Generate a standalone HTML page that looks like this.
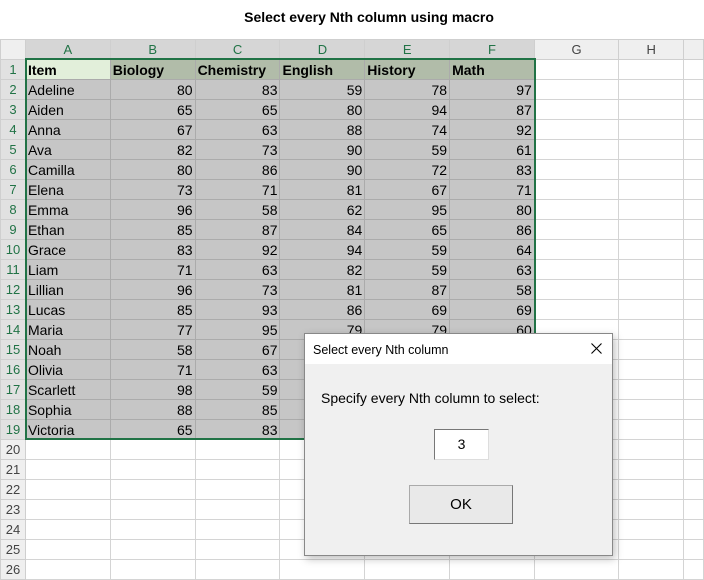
<!DOCTYPE html>
<html><head><meta charset="utf-8"><style>
*{margin:0;padding:0;box-sizing:border-box}
body{width:704px;height:580px;background:#fff;position:relative;overflow:hidden;font-family:"Liberation Sans",sans-serif}
.title{position:absolute;top:9px;left:0;width:738px;text-align:center;font-weight:bold;font-size:14px;color:#000}
table{position:absolute;left:0;top:39px;border-collapse:collapse;table-layout:fixed;font-size:14px}
td{height:20px;border:1px solid #d4d4d4;padding:0 2px;white-space:nowrap;overflow:hidden;line-height:18px}
td.rh{background:#efefef;color:#444;text-align:center;font-size:13px;border-color:#cfcfcf}
td.rs{background:#e1e1e1;color:#217346}
tr.ch td{background:#efefef;color:#444;text-align:center;font-size:13px;height:20px;border-color:#cfcfcf}
tr.ch td.cs{background:#d6d6d6;color:#217346}
td.s{background:#c6c6c6;border-color:#ababab;text-align:right}
td.s.l{text-align:left}
td.h{background:#b1bca9;font-weight:bold;text-align:left;border-color:#ababab}
td.a1{background:#e2efda;font-weight:bold;border-color:#ababab}
.sel{position:absolute;left:25px;top:58px;width:511px;height:382px;border:2px solid #217346}
.dlg{position:absolute;left:304px;top:333px;width:309px;height:223px;background:#f0f0f0;border:1px solid #888;box-shadow:2px 3px 8px rgba(0,0,0,.25);font-size:14px;color:#000}
.tb{height:30px;background:#fff;font-size:12.5px;padding:9px 0 0 8px}
.x{position:absolute;right:10px;top:9px;width:11px;height:11px}
.lbl{position:absolute;left:16px;top:56px}
.inp{position:absolute;left:129px;top:95px;width:55px;height:31px;background:#fff;border:1px solid #777;border-right-color:#ddd;border-bottom-color:#ddd;text-align:center;line-height:28px}
.ok{position:absolute;left:104px;top:151px;width:104px;height:39px;background:#e9e9e9;border:1px solid #aaa;border-right-color:#777;border-bottom-color:#777;text-align:center;line-height:37px;font-size:15px}
</style></head><body>
<div class="title">Select every Nth column using macro</div>
<table>
<colgroup><col style="width:25px"><col style="width:85px"><col style="width:85px"><col style="width:85px"><col style="width:85px"><col style="width:85px"><col style="width:85px"><col style="width:85px"><col style="width:65px"><col style="width:20px"></colgroup>
<tr class="ch"><td></td><td class="cs">A</td><td class="cs">B</td><td class="cs">C</td><td class="cs">D</td><td class="cs">E</td><td class="cs">F</td><td>G</td><td>H</td><td></td></tr>
<tr><td class="rh rs">1</td><td class="a1">Item</td><td class="h">Biology</td><td class="h">Chemistry</td><td class="h">English</td><td class="h">History</td><td class="h">Math</td><td></td><td></td><td></td></tr>
<tr><td class="rh rs">2</td><td class="s l">Adeline</td><td class="s">80</td><td class="s">83</td><td class="s">59</td><td class="s">78</td><td class="s">97</td><td></td><td></td><td></td></tr>
<tr><td class="rh rs">3</td><td class="s l">Aiden</td><td class="s">65</td><td class="s">65</td><td class="s">80</td><td class="s">94</td><td class="s">87</td><td></td><td></td><td></td></tr>
<tr><td class="rh rs">4</td><td class="s l">Anna</td><td class="s">67</td><td class="s">63</td><td class="s">88</td><td class="s">74</td><td class="s">92</td><td></td><td></td><td></td></tr>
<tr><td class="rh rs">5</td><td class="s l">Ava</td><td class="s">82</td><td class="s">73</td><td class="s">90</td><td class="s">59</td><td class="s">61</td><td></td><td></td><td></td></tr>
<tr><td class="rh rs">6</td><td class="s l">Camilla</td><td class="s">80</td><td class="s">86</td><td class="s">90</td><td class="s">72</td><td class="s">83</td><td></td><td></td><td></td></tr>
<tr><td class="rh rs">7</td><td class="s l">Elena</td><td class="s">73</td><td class="s">71</td><td class="s">81</td><td class="s">67</td><td class="s">71</td><td></td><td></td><td></td></tr>
<tr><td class="rh rs">8</td><td class="s l">Emma</td><td class="s">96</td><td class="s">58</td><td class="s">62</td><td class="s">95</td><td class="s">80</td><td></td><td></td><td></td></tr>
<tr><td class="rh rs">9</td><td class="s l">Ethan</td><td class="s">85</td><td class="s">87</td><td class="s">84</td><td class="s">65</td><td class="s">86</td><td></td><td></td><td></td></tr>
<tr><td class="rh rs">10</td><td class="s l">Grace</td><td class="s">83</td><td class="s">92</td><td class="s">94</td><td class="s">59</td><td class="s">64</td><td></td><td></td><td></td></tr>
<tr><td class="rh rs">11</td><td class="s l">Liam</td><td class="s">71</td><td class="s">63</td><td class="s">82</td><td class="s">59</td><td class="s">63</td><td></td><td></td><td></td></tr>
<tr><td class="rh rs">12</td><td class="s l">Lillian</td><td class="s">96</td><td class="s">73</td><td class="s">81</td><td class="s">87</td><td class="s">58</td><td></td><td></td><td></td></tr>
<tr><td class="rh rs">13</td><td class="s l">Lucas</td><td class="s">85</td><td class="s">93</td><td class="s">86</td><td class="s">69</td><td class="s">69</td><td></td><td></td><td></td></tr>
<tr><td class="rh rs">14</td><td class="s l">Maria</td><td class="s">77</td><td class="s">95</td><td class="s">79</td><td class="s">79</td><td class="s">60</td><td></td><td></td><td></td></tr>
<tr><td class="rh rs">15</td><td class="s l">Noah</td><td class="s">58</td><td class="s">67</td><td class="s"></td><td class="s"></td><td class="s"></td><td></td><td></td><td></td></tr>
<tr><td class="rh rs">16</td><td class="s l">Olivia</td><td class="s">71</td><td class="s">63</td><td class="s"></td><td class="s"></td><td class="s"></td><td></td><td></td><td></td></tr>
<tr><td class="rh rs">17</td><td class="s l">Scarlett</td><td class="s">98</td><td class="s">59</td><td class="s"></td><td class="s"></td><td class="s"></td><td></td><td></td><td></td></tr>
<tr><td class="rh rs">18</td><td class="s l">Sophia</td><td class="s">88</td><td class="s">85</td><td class="s"></td><td class="s"></td><td class="s"></td><td></td><td></td><td></td></tr>
<tr><td class="rh rs">19</td><td class="s l">Victoria</td><td class="s">65</td><td class="s">83</td><td class="s"></td><td class="s"></td><td class="s"></td><td></td><td></td><td></td></tr>
<tr><td class="rh">20</td><td></td><td></td><td></td><td></td><td></td><td></td><td></td><td></td><td></td></tr>
<tr><td class="rh">21</td><td></td><td></td><td></td><td></td><td></td><td></td><td></td><td></td><td></td></tr>
<tr><td class="rh">22</td><td></td><td></td><td></td><td></td><td></td><td></td><td></td><td></td><td></td></tr>
<tr><td class="rh">23</td><td></td><td></td><td></td><td></td><td></td><td></td><td></td><td></td><td></td></tr>
<tr><td class="rh">24</td><td></td><td></td><td></td><td></td><td></td><td></td><td></td><td></td><td></td></tr>
<tr><td class="rh">25</td><td></td><td></td><td></td><td></td><td></td><td></td><td></td><td></td><td></td></tr>
<tr><td class="rh">26</td><td></td><td></td><td></td><td></td><td></td><td></td><td></td><td></td><td></td></tr>
</table>
<div class="sel"></div>
<div class="dlg">
<div class="tb">Select every Nth column</div>
<svg class="x" viewBox="0 0 11 11"><path d="M0.5 0.5L10.5 10.5M10.5 0.5L0.5 10.5" stroke="#000" stroke-width="1.1" fill="none"/></svg>
<div class="lbl">Specify every Nth column to select:</div>
<div class="inp">3</div>
<div class="ok">OK</div>
</div>
</body></html>
